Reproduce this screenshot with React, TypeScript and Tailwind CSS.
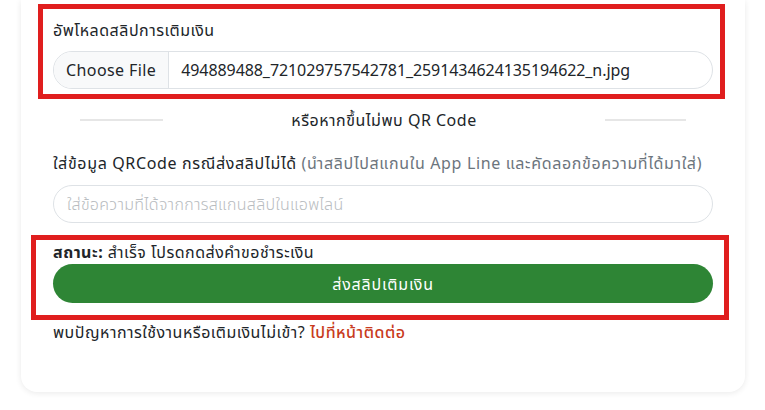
import React from "react";

const FONT = "font-['Noto_Sans','Noto_Sans_Thai',sans-serif]";

function Divider() {
  return (
    <div className="flex items-center h-[42px]">
      <div className="ml-[27px] w-[83px] h-[2px] bg-[#e6e6e6]" />
      <div className="flex-1 text-center text-[16px] tracking-[0.5px] text-[#212529]">หรือหากขึ้นไม่พบ QR Code</div>
      <div className="mr-[27px] w-[81px] h-[2px] bg-[#e6e6e6]" />
    </div>
  );
}

export default function App() {
  return (
    <div className={`min-h-[410px] bg-white ${FONT}`}>
      <div className="ml-[21px] w-[724px] rounded-b-2xl bg-white px-[32px] pt-[4px] pb-[48px] shadow-[0_1px_6px_rgba(0,0,0,0.09)]">
        {/* upload slip */}
        <div className="-ml-[15px] -mr-[12px] border-[5px] border-[#e01e1e] pl-[10px] pr-[7px] pt-[9px] pb-[5px]">
          <div className="mb-[9px] text-[16px] leading-[24px] tracking-[0.5px] text-[#212529]">อัพโหลดสลิปการเติมเงิน</div>
          <div className="flex h-[38px] items-stretch overflow-hidden rounded-[19px] border border-[#dee2e6]">
            <div className="flex items-center border-r border-[#dee2e6] bg-[#f8f9fa] px-[12px] text-[16px] tracking-[0.4px] text-[#212529]">
              Choose File
            </div>
            <div className="flex items-center pl-[12px] text-[16px] tracking-[-0.08px] text-[#212529]">
              494889488_721029757542781_2591434624135194622_n.jpg
            </div>
          </div>
        </div>

        <Divider />

        {/* qr code text */}
        <div className="mt-[10px] whitespace-nowrap text-[16px] leading-[24px] tracking-[0.65px]">
          <span className="text-[#212529]">ใส่ข้อมูล QRCode กรณีส่งสลิปไม่ได้ </span>
          <span className="text-[#6c757d]">(นำสลิปไปสแกนใน App Line และคัดลอกข้อความที่ได้มาใส่)</span>
        </div>
        <input
          type="text"
          placeholder="ใส่ข้อความที่ได้จากการสแกนสลิปในแอพไลน์"
          className="mt-[10px] block h-[38px] w-full rounded-[19px] border border-[#dee2e6] px-[13px] text-[16px] tracking-[0.3px] font-light text-[#212529] outline-none placeholder:text-[#b8bcc0]"
        />

        {/* status + submit */}
        <div className="mt-[12px] -ml-[22px] -mr-[16px] border-[5px] border-[#e01e1e] pl-[17px] pr-[11px] pb-[12px]">
          <div className="text-[16px] leading-[24px] tracking-[0.5px] text-[#212529]">
            <span className="font-bold">สถานะ:</span> สำเร็จ โปรดกดส่งคำขอชำระเงิน
          </div>
          <button
            type="button"
            className="flex h-[39px] w-full items-center justify-center rounded-[20px] bg-[#2e8535] text-[16px] tracking-[0.8px] text-white"
          >
            ส่งสลิปเติมเงิน
          </button>
        </div>

        <div className="text-[16px] leading-[24px] tracking-[0.5px] text-[#212529]">
          พบปัญหาการใช้งานหรือเติมเงินไม่เข้า? <span className="font-medium text-[#c83b20]">ไปที่หน้าติดต่อ</span>
        </div>
      </div>
    </div>
  );
}
